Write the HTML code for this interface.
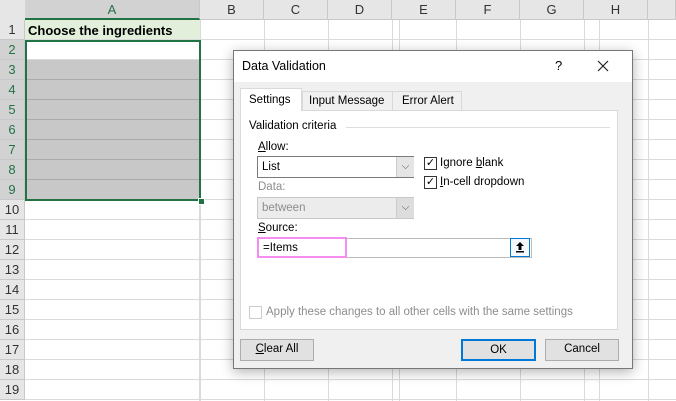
<!DOCTYPE html><html><head><style>
body{margin:0;width:676px;height:401px;overflow:hidden;background:#fff;font-family:"Liberation Sans",sans-serif;position:relative}
.a{position:absolute}
.ch{position:absolute;top:0;height:20px;background:#e6e6e6;border-right:1px solid #c8c8c8;border-bottom:1px solid #c8c8c8;box-sizing:border-box;font-size:13px;text-align:center;line-height:20px;color:#333}
.rh{position:absolute;left:0;width:25px;height:20px;background:#e6e6e6;border-bottom:1px solid #c8c8c8;border-right:1px solid #c8c8c8;box-sizing:border-box;font-size:13px;text-align:center;line-height:20px;color:#333}
.t{font-size:11.5px;color:#000;position:absolute}
.btn{position:absolute;background:#e1e1e1;border:1px solid #adadad;box-sizing:border-box;font-size:11.5px;text-align:center;line-height:19px}
.cb{position:absolute;width:13px;height:13px;border:1px solid #333;background:#fff;box-sizing:border-box;font-size:11px;line-height:11px;text-align:center}
</style></head><body>
<div class="a" style="left:0;top:0;width:676px;height:401px;background:
repeating-linear-gradient(to bottom,transparent 0 19px,#dadada 19px 20px),
repeating-linear-gradient(to right,transparent 0 199px,#dadada 199px 200px)"></div>
<div class="a" style="left:200px;top:0;width:476px;height:401px;background:repeating-linear-gradient(to right,#dadada 0 1px,transparent 1px 64px)"></div>
<div class="a" style="left:0;top:0;width:25px;height:20px;background:#e6e6e6"></div>
<div class="ch" style="left:25px;width:175px;background:#d2d2d2;color:#217346;border-bottom:2px solid #217346">A</div>
<div class="ch" style="left:200px;width:64px">B</div><div class="ch" style="left:264px;width:64px">C</div><div class="ch" style="left:328px;width:64px">D</div><div class="ch" style="left:392px;width:64px">E</div><div class="ch" style="left:456px;width:64px">F</div><div class="ch" style="left:520px;width:64px">G</div><div class="ch" style="left:584px;width:64px">H</div><div class="ch" style="left:648px;width:28px"></div>
<div class="rh" style="top:20px">1</div>
<div class="rh" style="top:40px;background:#d2d2d2;color:#217346">2</div><div class="rh" style="top:60px;background:#d2d2d2;color:#217346">3</div><div class="rh" style="top:80px;background:#d2d2d2;color:#217346">4</div><div class="rh" style="top:100px;background:#d2d2d2;color:#217346">5</div><div class="rh" style="top:120px;background:#d2d2d2;color:#217346">6</div><div class="rh" style="top:140px;background:#d2d2d2;color:#217346">7</div><div class="rh" style="top:160px;background:#d2d2d2;color:#217346">8</div><div class="rh" style="top:180px;background:#d2d2d2;color:#217346">9</div>
<div class="rh" style="top:200px">10</div><div class="rh" style="top:220px">11</div><div class="rh" style="top:240px">12</div><div class="rh" style="top:260px">13</div><div class="rh" style="top:280px">14</div><div class="rh" style="top:300px">15</div><div class="rh" style="top:320px">16</div><div class="rh" style="top:340px">17</div><div class="rh" style="top:360px">18</div><div class="rh" style="top:380px">19</div>
<div class="a" style="left:25px;top:20px;width:175px;height:20px;background:#e2efda;font-weight:bold;font-size:13px;line-height:21px;padding-left:3px;box-sizing:border-box;border-bottom:1px solid #dadada">Choose the ingredients</div>
<div class="a" style="left:26px;top:60px;width:173px;height:140px;background:repeating-linear-gradient(to bottom,#c8c8c8 0 19px,#aaa 19px 20px)"></div>
<div class="a" style="left:25px;top:40px;width:176px;height:161px;border:2px solid #217346;box-sizing:border-box"></div>
<div class="a" style="left:198px;top:198px;width:5px;height:5px;background:#217346;border:1px solid #fff"></div>
<div class="a" style="left:233px;top:50px;width:400px;height:319px;background:#f0f0f0;border:1px solid #777;box-sizing:border-box;box-shadow:0 3px 12px rgba(0,0,0,.3)"></div>
<div class="a" style="left:234px;top:51px;width:398px;height:31px;background:#fff"></div>
<div class="t" style="left:242px;top:59px;font-size:12.5px">Data Validation</div>
<div class="t" style="left:555px;top:58px;font-size:13px">?</div>
<svg class="a" style="left:597px;top:60px" width="12" height="12"><path d="M1 1L11 11M11 1L1 11" stroke="#222" stroke-width="1.2"/></svg>
<div class="a" style="left:240px;top:110px;width:378px;height:220px;background:#fff;border:1px solid #d9d9d9;box-sizing:border-box"></div>
<div class="a" style="left:302px;top:91px;width:91px;height:20px;background:#f0f0f0;border:1px solid #d9d9d9;box-sizing:border-box"></div>
<div class="a" style="left:392px;top:91px;width:70px;height:20px;background:#f0f0f0;border:1px solid #d9d9d9;box-sizing:border-box"></div>
<div class="a" style="left:240px;top:88px;width:62px;height:23px;background:#fff;border:1px solid #d9d9d9;border-bottom:none;box-sizing:border-box"></div>
<div class="t" style="left:249px;top:94px">Settings</div>
<div class="t" style="left:309px;top:95px">Input Message</div>
<div class="t" style="left:402px;top:95px">Error Alert</div>
<div class="t" style="left:249px;top:120px">Validation criteria</div>
<div class="a" style="left:346px;top:127px;width:264px;height:1px;background:#ddd"></div>
<div class="t" style="left:258px;top:141px"><u>A</u>llow:</div>
<div class="a" style="left:257px;top:156px;width:157px;height:22px;border:1px solid #7a7a7a;box-sizing:border-box;background:#fff"></div>
<div class="t" style="left:262px;top:161px">List</div>
<div class="a" style="left:396px;top:157px;width:17px;height:20px;background:#e5e5e5;border-left:1px solid #ccc;font-size:10px;text-align:center;line-height:20px;color:#555">⌵</div>
<div class="t" style="left:258px;top:181px;color:#8d8d8d">Data:</div>
<div class="a" style="left:257px;top:197px;width:157px;height:22px;border:1px solid #c8c8c8;box-sizing:border-box;background:#ececec"></div>
<div class="t" style="left:262px;top:202px;color:#8d8d8d">between</div>
<div class="a" style="left:396px;top:198px;width:17px;height:20px;background:#ddd;border-left:1px solid #ccc;font-size:10px;text-align:center;line-height:20px;color:#555">⌵</div>
<div class="cb" style="left:424px;top:157px">✓</div><div class="t" style="left:440px;top:157px">Ignore <u>b</u>lank</div>
<div class="cb" style="left:424px;top:176px">✓</div><div class="t" style="left:440px;top:176px"><u>I</u>n-cell dropdown</div>
<div class="t" style="left:258px;top:222px"><u>S</u>ource:</div>
<div class="a" style="left:257px;top:238px;width:275px;height:20px;border:1px solid #bbb;box-sizing:border-box;background:#fff"></div>
<div class="a" style="left:257px;top:237px;width:90px;height:21px;border:2px solid #f58cf0;box-sizing:border-box"></div>
<div class="t" style="left:263px;top:242px">=Items</div>
<div class="a" style="left:510px;top:238px;width:20px;height:19px;border:1px solid #0078d7;box-sizing:border-box;background:#f5f9fd"></div>
<svg class="a" style="left:514px;top:241px" width="12" height="12"><path d="M6 1L2 5H4.5V9H7.5V5H10Z" fill="#000"/><rect x="2" y="10" width="8" height="1.5" fill="#000"/></svg>
<div class="cb" style="left:249px;top:306px;border-color:#ccc"></div>
<div class="t" style="left:266px;top:306px;color:#8d8d8d">Apply these changes to all other cells with the same settings</div>
<div class="btn" style="left:240px;top:339px;width:74px;height:22px"><u>C</u>lear All</div>
<div class="btn" style="left:461px;top:339px;width:75px;height:22px;border:2px solid #0078d7;line-height:18px">OK</div>
<div class="btn" style="left:545px;top:339px;width:74px;height:22px">Cancel</div>
</body></html>
